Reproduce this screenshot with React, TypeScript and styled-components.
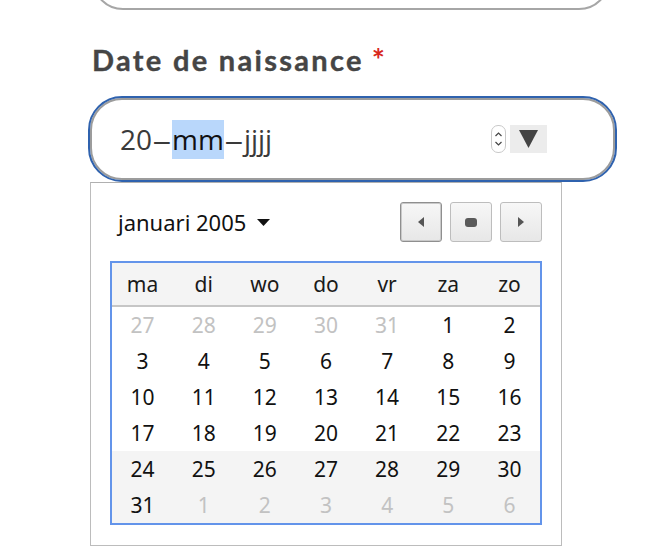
import React from "react";
import styled, { createGlobalStyle } from "styled-components";

const GlobalStyle = createGlobalStyle`
  html, body { margin: 0; padding: 0; background: #ffffff; }
  body { font-family: "Noto Sans", "Open Sans", sans-serif; overflow: hidden; }
`;

const Page = styled.div`
  width: 666px;
  height: 552px;
  padding-left: 90px;
  box-sizing: border-box;
  overflow: hidden;
`;

const PrevField = styled.div`
  width: 518px;
  height: 62px;
  margin-top: -52px;
  margin-left: 2px;
  box-sizing: border-box;
  border: 2px solid #a6a6a6;
  border-radius: 32px;
`;

const Label = styled.div`
  margin-top: 32px;
  margin-left: 2px;
  font-family: "Lato", "Open Sans", sans-serif;
  font-weight: 700;
  font-size: 29px;
  line-height: 34px;
  color: #454545;
  letter-spacing: 2.3px;
  -webkit-text-stroke: 0.4px #454545;
`;

const Required = styled.span`
  color: #d8271c;
  margin-left: 8px;
  font-size: 31px;
  -webkit-text-stroke: 0;
`;

const DateField = styled.div`
  margin-top: 21px;
  width: 525px;
  height: 82px;
  box-sizing: border-box;
  border: 2px solid #9c9c9c;
  outline: 2px solid #2f62ae;
  border-radius: 32px;
  display: flex;
  align-items: center;
  padding: 0 66px 0 28px;
  font-family: "Open Sans", "Noto Sans", sans-serif;
  font-size: 28px;
  color: #3a3a3a;
`;

const Segments = styled.div`
  flex: 1;
  display: flex;
  align-items: center;
`;

const Seg = styled.span<{ $selected?: boolean }>`
  display: inline-block;
  line-height: 39px;
  background: ${(p) => (p.$selected ? "#b9d7fb" : "transparent")};
  color: ${(p) => (p.$selected ? "#111111" : "#3a3a3a")};
`;

const Sep = styled.span`
  display: inline-block;
  width: 20px;
  text-align: center;
  transform: scaleX(2.3);
`;

const Spinner = styled.div`
  width: 15px;
  height: 28px;
  box-sizing: border-box;
  border: 1px solid #c9c9c9;
  border-radius: 7px;
  display: flex;
  align-items: center;
  justify-content: center;
  margin-right: 4px;
`;

const DropBtn = styled.div`
  width: 37px;
  height: 28px;
  background: #ececec;
  display: flex;
  align-items: center;
  justify-content: center;
`;

const Popup = styled.div`
  width: 472px;
  box-sizing: border-box;
  border: 1px solid #bcbcbc;
  border-top-color: #b0b0b0;
  padding: 19px 19px 20px 19px;
  margin-top: 2px;
`;

const Header = styled.div`
  display: flex;
  align-items: center;
  height: 40px;
  margin-bottom: 19px;
  padding-left: 8px;
`;

const MonthLabel = styled.div`
  flex: 1;
  display: flex;
  align-items: center;
  gap: 11px;
  font-size: 22px;
  color: #111111;
`;

const NavGroup = styled.div`
  display: flex;
  gap: 8px;
`;

const NavButton = styled.div<{ $focused?: boolean }>`
  width: 42px;
  height: 40px;
  box-sizing: border-box;
  border: 1px solid ${(p) => (p.$focused ? "#8f8f8f" : "#bdbdbd")};
  border-radius: 3px;
  background: linear-gradient(#f7f7f7, #e7e7e7);
  display: flex;
  align-items: center;
  justify-content: center;
  box-shadow: ${(p) => (p.$focused ? "inset 0 0 0 1px #c9c9c9" : "none")};
`;

const Grid = styled.div`
  width: 432px;
  box-sizing: border-box;
  border: 2px solid #6394ea;
`;

const HeadRow = styled.div`
  display: grid;
  grid-template-columns: repeat(7, 1fr);
  height: 44px;
  box-sizing: border-box;
  background: #f4f4f4;
  border-bottom: 2px solid #c6c6c6;
  align-items: center;
`;

const DayRow = styled.div<{ $shaded?: boolean }>`
  display: grid;
  grid-template-columns: repeat(7, 1fr);
  height: 36px;
  align-items: center;
  background: ${(p) => (p.$shaded ? "#f4f4f4" : "#ffffff")};
`;

const Cell = styled.div<{ $muted?: boolean }>`
  text-align: center;
  font-size: 21px;
  color: ${(p) => (p.$muted ? "#c2c2c2" : "#111111")};
`;

const HeadCell = styled(Cell)`
  color: #1a1a1a;
`;

const heads = ["ma", "di", "wo", "do", "vr", "za", "zo"];

const weeks: { d: number; m: boolean }[][] = [
  [27, 28, 29, 30, 31].map((d) => ({ d, m: true })).concat([1, 2].map((d) => ({ d, m: false }))),
  [3, 4, 5, 6, 7, 8, 9].map((d) => ({ d, m: false })),
  [10, 11, 12, 13, 14, 15, 16].map((d) => ({ d, m: false })),
  [17, 18, 19, 20, 21, 22, 23].map((d) => ({ d, m: false })),
  [24, 25, 26, 27, 28, 29, 30].map((d) => ({ d, m: false })),
  [{ d: 31, m: false }].concat([1, 2, 3, 4, 5, 6].map((d) => ({ d, m: true }))),
];

export default function App() {
  return (
    <>
      <GlobalStyle />
      <Page>
        <PrevField />
        <Label>
          Date de naissance<Required>*</Required>
        </Label>
        <DateField>
          <Segments>
            <Seg>20</Seg>
            <Sep>-</Sep>
            <Seg $selected>mm</Seg>
            <Sep>-</Sep>
            <Seg>jjjj</Seg>
          </Segments>
          <Spinner>
            <svg width="9" height="20" viewBox="0 0 9 20">
              <path d="M1.5 7 L4.5 4 L7.5 7" fill="none" stroke="#444" strokeWidth="1.2" />
              <path d="M1.5 13 L4.5 16 L7.5 13" fill="none" stroke="#444" strokeWidth="1.2" />
            </svg>
          </Spinner>
          <DropBtn>
            <svg width="19" height="18" viewBox="0 0 19 18">
              <path d="M0 0 H19 L9.5 18 Z" fill="#444444" />
            </svg>
          </DropBtn>
        </DateField>
        <Popup>
          <Header>
            <MonthLabel>
              januari 2005
              <svg width="13" height="7" viewBox="0 0 13 7">
                <path d="M0 0 H13 L6.5 7 Z" fill="#111111" />
              </svg>
            </MonthLabel>
            <NavGroup>
              <NavButton $focused>
                <svg width="6" height="10" viewBox="0 0 6 10">
                  <path d="M6 0 V10 L0 5 Z" fill="#555555" />
                </svg>
              </NavButton>
              <NavButton>
                <svg width="12" height="9" viewBox="0 0 12 9">
                  <rect x="0" y="0" width="12" height="9" rx="3" fill="#5a5a5a" />
                </svg>
              </NavButton>
              <NavButton>
                <svg width="6" height="10" viewBox="0 0 6 10">
                  <path d="M0 0 V10 L6 5 Z" fill="#555555" />
                </svg>
              </NavButton>
            </NavGroup>
          </Header>
          <Grid>
            <HeadRow>
              {heads.map((h) => (
                <HeadCell key={h}>{h}</HeadCell>
              ))}
            </HeadRow>
            {weeks.map((w, i) => (
              <DayRow key={i} $shaded={i >= 4}>
                {w.map((c, j) => (
                  <Cell key={j} $muted={c.m}>
                    {c.d}
                  </Cell>
                ))}
              </DayRow>
            ))}
          </Grid>
        </Popup>
      </Page>
    </>
  );
}
